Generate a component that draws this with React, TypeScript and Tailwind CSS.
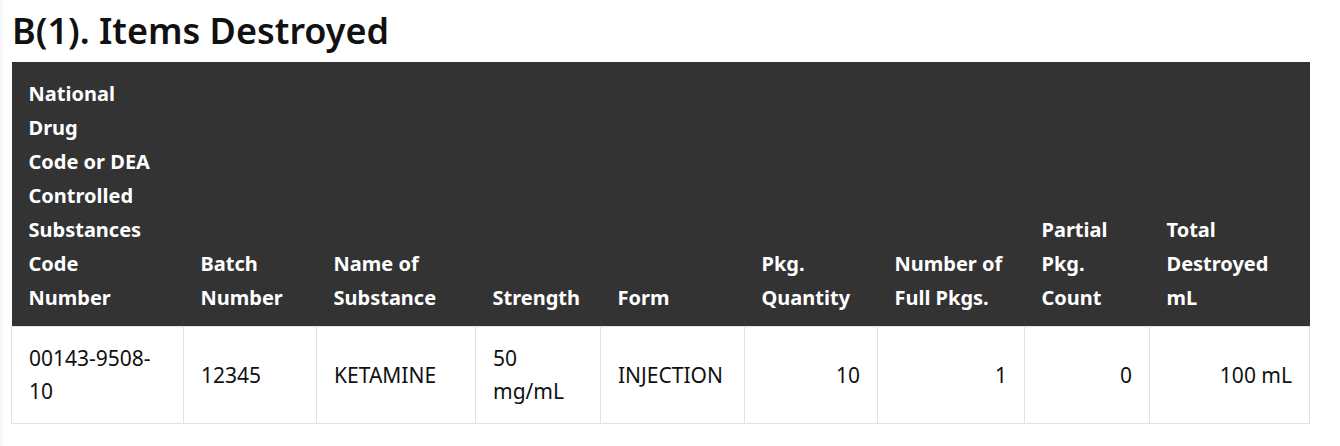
import React from 'react';

type Row = {
  ndc: string;
  batch: string;
  name: string;
  strength: string;
  form: string;
  qty: string;
  full: string;
  partial: string;
  total: string;
};

// header lines are broken by hand so the wrap matches the printed form
const columns = [
  { lines: ['National', 'Drug', 'Code or DEA', 'Controlled', 'Substances', 'Code', 'Number'], w: 'w-[172px]' },
  { lines: ['Batch', 'Number'], w: 'w-[133px]' },
  { lines: ['Name of', 'Substance'], w: 'w-[159px]' },
  { lines: ['Strength'], w: 'w-[125px]' },
  { lines: ['Form'], w: 'w-[144px]' },
  { lines: ['Pkg.', 'Quantity'], w: 'w-[133px]' },
  { lines: ['Number of', 'Full Pkgs.'], w: 'w-[147px]' },
  { lines: ['Partial', 'Pkg.', 'Count'], w: 'w-[125px]' },
  { lines: ['Total', 'Destroyed', 'mL'], w: 'w-[160px]' },
];

const rows: Row[] = [
  {
    ndc: '00143-9508-10',
    batch: '12345',
    name: 'KETAMINE',
    strength: '50 mg/mL',
    form: 'INJECTION',
    qty: '10',
    full: '1',
    partial: '0',
    total: '100 mL',
  },
];

const td = 'border border-[#e2e2e6] px-[17px] py-[15px] align-middle';

export default function App() {
  return (
    <div className="min-h-screen bg-white border-l-[3px] border-[#f7f7f7] pl-2 pr-8 pt-[9px] font-['Noto_Sans','Open_Sans',sans-serif] text-[#111]">
      <h1 className="text-[36px] font-semibold leading-[44px] mb-[9px] ml-[1px]">B(1). Items Destroyed</h1>

      <table className="table-fixed border-collapse w-[1298px]">
        <thead>
          <tr className="bg-[#333333] text-white">
            {columns.map((c) => (
              <th
                key={c.lines.join(' ')}
                className={`${c.w} align-bottom text-left font-bold text-[20px] leading-[34px] px-[17px] pt-[15px] pb-[11px]`}
              >
                {c.lines.map((l, i) => (
                  <div key={i} className="whitespace-nowrap">{l}</div>
                ))}
              </th>
            ))}
          </tr>
        </thead>
        <tbody>
          {rows.map((r) => (
            <tr key={r.ndc} className="text-[21px] leading-[33px]">
              <td className={td}>
                00143-9508-
                <br />
                10
              </td>
              <td className={td}>{r.batch}</td>
              <td className={td}>{r.name}</td>
              <td className={td}>
                50
                <br />
                mg/mL
              </td>
              <td className={td}>{r.form}</td>
              <td className={`${td} text-right`}>{r.qty}</td>
              <td className={`${td} text-right`}>{r.full}</td>
              <td className={`${td} text-right`}>{r.partial}</td>
              <td className={`${td} text-right`}>{r.total}</td>
            </tr>
          ))}
        </tbody>
      </table>
    </div>
  );
}
